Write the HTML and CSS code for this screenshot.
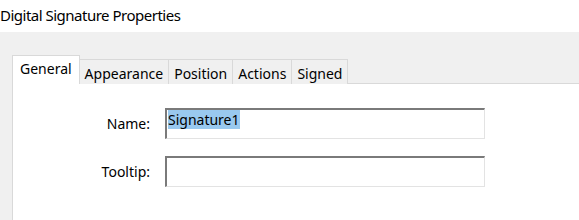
FILE: index.html
```html
<!DOCTYPE html>
<html lang="en">
<head>
    <meta charset="UTF-8">
    <title>Digital Signature Properties</title>
    <link rel="stylesheet" href="styles.css">
</head>
<body>
    <div class="title-bar">Digital Signature Properties</div>
    <div class="dialog">
        <div class="tabs">
            <div class="tab active">General</div>
            <div class="tab">Appearance</div>
            <div class="tab">Position</div>
            <div class="tab">Actions</div>
            <div class="tab">Signed</div>
        </div>
        <div class="panel">
            <div class="field-row">
                <label class="field-label">Name:</label>
                <div class="text-box"><span class="selected">Signature1</span></div>
            </div>
            <div class="field-row">
                <label class="field-label">Tooltip:</label>
                <div class="text-box"></div>
            </div>
        </div>
    </div>
</body>
</html>
```

FILE: styles.css
```css
body {
    margin: 0;
    font-family: "Noto Sans", "Open Sans", sans-serif;
    font-size: 14px;
    color: #000;
    background-color: #f0f0f0;
    height: 220px;
    overflow: hidden;
}

.title-bar {
    height: 32px;
    line-height: 30px;
    background-color: #fff;
    font-size: 15px;
    letter-spacing: -0.5px;
}

.dialog {
    padding: 24px 0 0 12px;
}

.tabs {
    display: flex;
    align-items: flex-end;
    height: 28px;
    position: relative;
    z-index: 1;
    margin-bottom: -1px;
}

.tab {
    height: 24px;
    line-height: 27px;
    padding: 0 5px;
    border: 1px solid #d9d9d9;
    border-bottom: none;
    border-left: none;
    background-color: #f0f0f0;
}

.tab.active {
    height: 28px;
    line-height: 26px;
    padding: 0 7px;
    border-left: 1px solid #d9d9d9;
    background-color: #fff;
}

.panel {
    box-sizing: border-box;
    height: 137px;
    background-color: #fff;
    border-top: 1px solid #d9d9d9;
    border-left: 1px solid #d9d9d9;
    padding-top: 24px;
}

.field-row {
    display: flex;
    align-items: center;
    margin-bottom: 17px;
}

.field-label {
    width: 137px;
    text-align: right;
    margin-right: 15px;
}

.text-box {
    width: 316px;
    height: 28px;
    border-top: 2px solid #7a7a7a;
    border-left: 2px solid #7a7a7a;
    border-right: 1px solid #e3e3e3;
    border-bottom: 1px solid #e3e3e3;
    padding: 0 0 0 1px;
    line-height: 20px;
}

.selected {
    background-color: #99c9ef;
}
```
